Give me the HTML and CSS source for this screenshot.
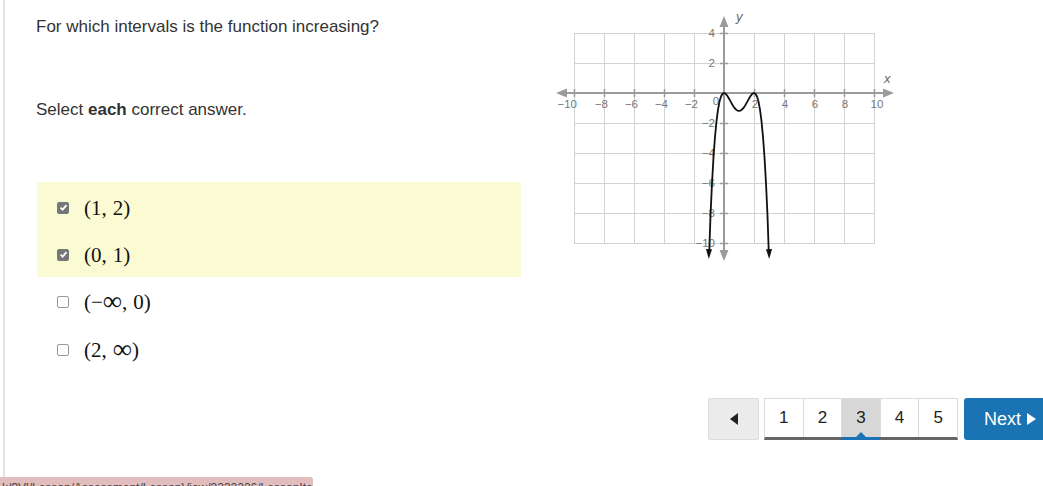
FILE: index.html
```html
<!DOCTYPE html>
<html>
<head>
<meta charset="utf-8">
<link rel="stylesheet" href="styles.css">
</head>
<body>
<div class="frame">
  <div class="top">
    <div class="left">
      <p class="question">For which intervals is the function increasing?</p>
      <p class="instr">Select <b>each</b> correct answer.</p>
      <div class="picked">
        <div class="opt">
          <span class="cb checked"><svg width="11" height="11" viewBox="0 0 11 11"><path d="M2.6 5.6 L4.6 7.6 L8.5 3.2" fill="none" stroke="#fff" stroke-width="1.8"/></svg></span>
          <span class="math">(1,<span class="sp"></span>2)</span>
        </div>
        <div class="opt">
          <span class="cb checked"><svg width="11" height="11" viewBox="0 0 11 11"><path d="M2.6 5.6 L4.6 7.6 L8.5 3.2" fill="none" stroke="#fff" stroke-width="1.8"/></svg></span>
          <span class="math">(0,<span class="sp"></span>1)</span>
        </div>
      </div>
      <div class="opt plain">
        <span class="cb"></span>
        <span class="math">(−<span class="inf">∞</span>,<span class="sp"></span>0)</span>
      </div>
      <div class="opt plain">
        <span class="cb"></span>
        <span class="math">(2,<span class="sp"></span><span class="inf">∞</span>)</span>
      </div>
    </div>
    <svg class="graph" width="360" height="270" viewBox="0 0 360 270">
      <g transform="translate(-540,0)">
        <g class="grid">
          <path d="M574.5 33 V243 M604.5 33 V243 M634.5 33 V243 M664.5 33 V243 M694.5 33 V243 M754.5 33 V243 M784.5 33 V243 M814.5 33 V243 M844.5 33 V243 M874.5 33 V243"/>
          <path d="M574 33.5 H875 M574 63.5 H875 M574 123.5 H875 M574 153.5 H875 M574 183.5 H875 M574 213.5 H875 M574 243.5 H875"/>
        </g>
        <g class="axis">
          <path class="axline" d="M563 93 H887 M724 23 V254"/>
          <path class="ticks" d="M574.5 89 V97 M604.5 89 V97 M634.5 89 V97 M664.5 89 V97 M694.5 89 V97 M754.5 89 V97 M784.5 89 V97 M814.5 89 V97 M844.5 89 V97 M874.5 89 V97 M720 33.5 H728 M720 63.5 H728 M720 123.5 H728 M720 153.5 H728 M720 183.5 H728 M720 213.5 H728 M720 243.5 H728"/>
          <polygon points="556,93 567,88.5 567,97.5"/>
          <polygon points="894,93 883,88.5 883,97.5"/>
          <polygon points="724,16 719.5,27 728.5,27"/>
          <polygon points="724,261 719.5,250 728.5,250"/>
        </g>
        <g class="lbl">
          <text x="577" y="108" text-anchor="end">−10</text>
          <text x="608" y="108" text-anchor="end">−8</text>
          <text x="638" y="108" text-anchor="end">−6</text>
          <text x="668" y="108" text-anchor="end">−4</text>
          <text x="698" y="108" text-anchor="end">−2</text>
          <text x="716" y="105" text-anchor="middle">0</text>
          <text x="755" y="108" text-anchor="middle">2</text>
          <text x="785" y="108" text-anchor="middle">4</text>
          <text x="815" y="108" text-anchor="middle">6</text>
          <text x="845" y="108" text-anchor="middle">8</text>
          <text x="877" y="108" text-anchor="middle">10</text>
          <text x="715" y="37" text-anchor="end">4</text>
          <text x="715" y="67" text-anchor="end">2</text>
          <text x="715" y="127" text-anchor="end">−2</text>
          <text x="715" y="157" text-anchor="end">−4</text>
          <text x="715" y="187" text-anchor="end">−6</text>
          <text x="715" y="217" text-anchor="end">−8</text>
          <text x="715" y="247" text-anchor="end">−10</text>
          <text class="var" x="884" y="83">x</text>
          <text class="var" x="736" y="21">y</text>
        </g>
        <polyline class="curve" points="709.3,250 710.5,215.6 712,183.3 713.5,157.3 715,136.8 716.5,121.1 718,109.6 719.5,101.6 721,96.5 722.5,93.8 724,93 725.5,93.65 727,95.3 728.5,97.7 730,100.4 731.5,103.1 733,105.7 734.5,107.9 736,109.6 737.5,110.6 739,111 740.5,110.6 742,109.6 743.5,107.9 745,105.7 746.5,103.1 748,100.4 749.5,97.7 751,95.3 752.5,93.65 754,93 755.5,93.8 757,96.5 758.5,101.6 760,109.6 761.5,121.1 763,136.8 764.5,157.3 766,183.3 767.5,215.6 768.7,250"/>
        <polygon class="head" points="708.8,259 706,249 712,249.3"/>
        <polygon class="head" points="769.2,259 766,249.3 772,249"/>
      </g>
    </svg>
  </div>
  <div class="pager">
    <div class="prev"><span class="tri-left"></span></div>
    <div class="pages">
      <span class="pg">1</span>
      <span class="pg">2</span>
      <span class="pg cur">3</span>
      <span class="pg">4</span>
      <span class="pg">5</span>
    </div>
    <div class="next">Next <span class="tri-right"></span></div>
  </div>
</div>
<div class="status">k/?Vl/Lesson/Assessment/LessonView/3232226/LessonItemContent</div>
</body>
</html>
```
FILE: styles.css
```css
html, body {
  margin: 0;
  padding: 0;
  background: #fff;
}
body {
  width: 1043px;
  height: 486px;
  overflow: hidden;
  font-family: "Liberation Sans", Arial, sans-serif;
  color: #333;
}
.frame {
  margin-left: 3px;
  border-left: 2px solid #e3e3e3;
  height: 477px;
  box-sizing: border-box;
  overflow: hidden;
}
.top {
  display: flex;
  height: 398px;
}
.left {
  width: 535px;
  padding-left: 31px;
  box-sizing: border-box;
  flex: none;
}
.question {
  margin: 17px 0 0;
  font-size: 17px;
  line-height: 20px;
}
.instr {
  margin: 63px 0 0;
  font-size: 17px;
  line-height: 20px;
}
.instr b {
  font-weight: bold;
}
.picked {
  margin: 62px 0 0 1px;
  width: 484px;
  height: 95px;
  padding-top: 2px;
  box-sizing: border-box;
  background: #fbfbd3;
}
.opt {
  display: flex;
  align-items: center;
  height: 47px;
  padding-left: 20px;
}
.opt.plain {
  height: 48px;
  margin-left: 1px;
}
.picked + .opt.plain {
  margin-top: 1px;
}
.cb {
  width: 12px;
  height: 12px;
  box-sizing: border-box;
  border: 1px solid #9a9a9a;
  border-radius: 2px;
  background: #fff;
  flex: none;
  display: flex;
}
.cb.checked {
  border-color: #777;
  background: #777;
}
.cb.checked svg {
  margin: -0.5px;
}
.math {
  margin-left: 15px;
  font-family: "Liberation Serif", "Times New Roman", serif;
  font-size: 21px;
  color: #111;
  line-height: 24px;
}
.inf {
  font-size: 27px;
  line-height: 0;
  vertical-align: -1px;
}
.sp {
  display: inline-block;
  width: 6px;
}
.graph {
  flex: none;
  display: block;
}
.grid path {
  stroke: #d2d2d2;
  stroke-width: 1;
  fill: none;
}
.axline {
  stroke: #9b9b9b;
  stroke-width: 2;
  fill: none;
}
.ticks {
  stroke: #9b9b9b;
  stroke-width: 1.5;
  fill: none;
}
.axis polygon {
  fill: #9b9b9b;
}
.lbl text {
  font-family: "Liberation Sans", Arial, sans-serif;
  font-size: 11.5px;
  fill: #777;
}
.lbl text.var {
  font-style: italic;
  font-size: 13px;
  fill: #666;
}
.curve {
  fill: none;
  stroke: #111;
  stroke-width: 1.8;
  stroke-linejoin: round;
}
.head {
  fill: #111;
}
.pager {
  display: flex;
  align-items: stretch;
  height: 42px;
  margin-left: 703px;
}
.prev {
  width: 51px;
  box-sizing: border-box;
  background: #ebebeb;
  border: 1px solid #dcdcdc;
  border-radius: 2px;
  display: flex;
  align-items: center;
  justify-content: center;
  flex: none;
}
.tri-left {
  width: 0;
  height: 0;
  border-top: 6px solid transparent;
  border-bottom: 6px solid transparent;
  border-right: 8px solid #222;
}
.pages {
  margin-left: 5px;
  width: 194px;
  box-sizing: border-box;
  display: flex;
  border: 1px solid #dcdcdc;
  border-bottom: 3px solid #666;
  background: #fff;
  flex: none;
}
.pg {
  flex: 1;
  display: flex;
  align-items: center;
  justify-content: center;
  font-size: 17px;
  color: #222;
  border-left: 1px solid #dcdcdc;
  position: relative;
}
.pg:first-child {
  border-left: none;
}
.pg.cur {
  background: #d7d7d7;
}
.pg.cur::after {
  content: "";
  position: absolute;
  left: -1px;
  right: 0;
  bottom: -3px;
  height: 3px;
  background: #1a73b4;
}
.pg.cur::before {
  content: "";
  position: absolute;
  left: 50%;
  bottom: 0;
  margin-left: -5px;
  width: 0;
  height: 0;
  border-left: 5px solid transparent;
  border-right: 5px solid transparent;
  border-bottom: 5px solid #1a73b4;
}
.next {
  margin-left: 6px;
  width: 90px;
  flex: none;
  background: #1a74b3;
  border-radius: 3px;
  color: #fff;
  font-size: 18px;
  display: flex;
  align-items: center;
  padding-left: 20px;
  box-sizing: border-box;
}
.tri-right {
  margin-left: 6px;
  width: 0;
  height: 0;
  border-top: 6px solid transparent;
  border-bottom: 6px solid transparent;
  border-left: 9px solid #fff;
}
.status {
  width: 313px;
  height: 9px;
  overflow: hidden;
  background: #e2bdbd;
  border-top-right-radius: 3px;
  font-size: 12px;
  line-height: 14px;
  padding-top: 4px;
  box-sizing: border-box;
  color: #444;
  white-space: nowrap;
  padding-left: 2px;
}
```
